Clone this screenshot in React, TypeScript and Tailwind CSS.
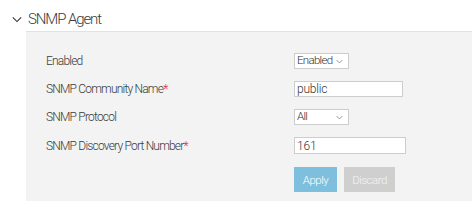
import React, {useState} from "react";

const Chevron = ({className}: {className?: string}) => (
    <svg viewBox="0 0 12 8" className={className} fill="none" stroke="currentColor" strokeWidth="1.3">
        <path d="M1 1.5 L6 6.5 L11 1.5" />
    </svg>
);

const Select = ({value}: {value: string}) => (
    <div className="w-[55px] h-[16px] bg-white border border-[#cdcdcd] flex items-center justify-between pl-[2px] pr-[5px] text-[11.5px] tracking-[-0.7px] font-light text-[#333]">
        <span className="leading-none">{value}</span>
        <Chevron className="w-[7px] h-[5px] text-[#777] shrink-0" />
    </div>
);

const App = () => {
    const [name, setName] = useState("public");
    const [port, setPort] = useState("161");

    return (
        <div className="w-[474px] h-[209px] bg-white font-['Roboto',sans-serif] text-[#3a3a3a] pt-[9px]">
            <div className="flex items-center h-[20px] pl-[12px]">
                <Chevron className="w-[10px] h-[7px] text-[#333]" />
                <span className="ml-[6px] text-[15px] tracking-[-1.1px] leading-none font-light">SNMP Agent</span>
            </div>
            <div className="ml-[26px] mr-[2px] mt-[2px] h-[170px] bg-[#f3f3f3] border-t border-[#e2e2e2] pt-[21px] pl-[20px]">
                <div className="grid grid-cols-[248px_1fr] gap-y-[12px] items-center text-[12px] tracking-[-0.8px] leading-[16px] font-light">
                    <div>Enabled</div>
                    <Select value="Enabled" />
                    <div>SNMP Community Name<span className="text-[#e0203a]">*</span></div>
                    <input
                        className="w-[109px] h-[16px] bg-white border border-[#cdcdcd] px-[2px] text-[12px] tracking-[-0.2px] text-[#333] outline-none"
                        value={name}
                        onChange={(e) => setName(e.target.value)}
                    />
                    <div>SNMP Protocol</div>
                    <Select value="All" />
                    <div>SNMP Discovery Port Number<span className="text-[#e0203a]">*</span></div>
                    <input
                        className="w-[112px] h-[17px] bg-white border border-[#cdcdcd] px-[2px] text-[12px] tracking-[-0.2px] text-[#333] outline-none"
                        value={port}
                        onChange={(e) => setPort(e.target.value)}
                    />
                    <div />
                    <div className="flex gap-[7px] mt-[1px]">
                        <button className="w-[43px] h-[25px] bg-[#7dbfdc] text-white text-[11.5px] tracking-[-0.5px] font-light">Apply</button>
                        <button className="w-[51px] h-[25px] bg-[#cfcfcf] text-[#f4f4f4] text-[11.5px] tracking-[-0.5px] font-light">Discard</button>
                    </div>
                </div>
            </div>
        </div>
    );
};

export default App;
